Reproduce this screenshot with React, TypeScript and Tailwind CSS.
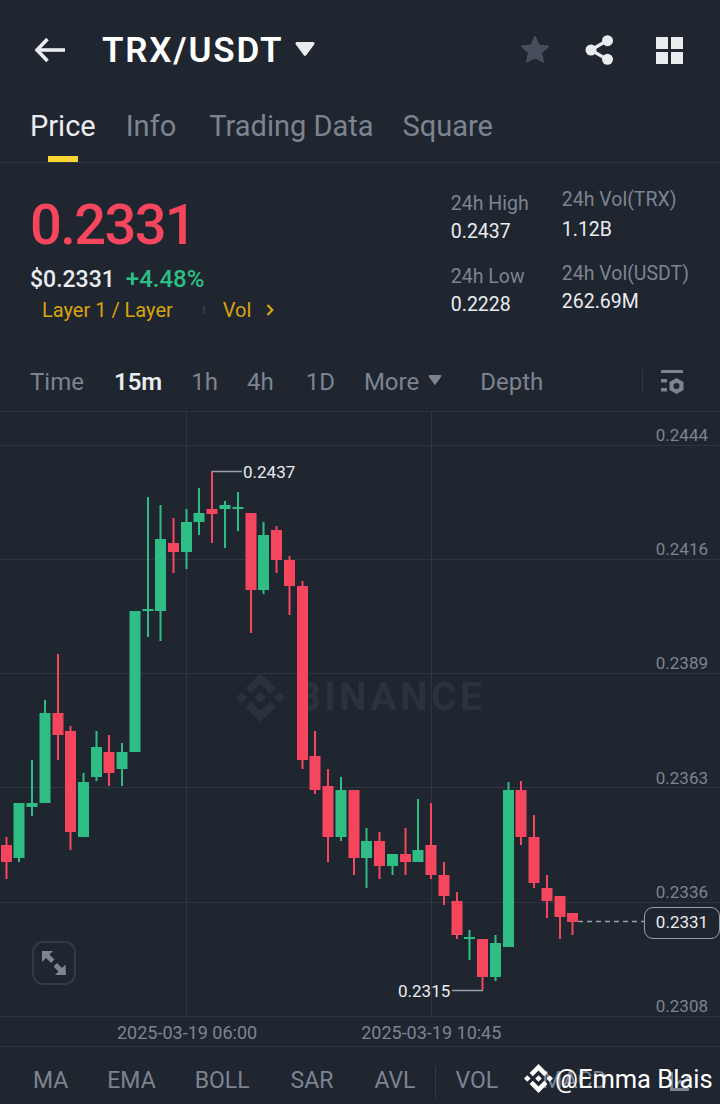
const BINANCE_LOGO =
  'M38.73 53.2l24.59-24.58 24.6 24.6 14.3-14.31L63.32 0 24.43 38.9l14.3 14.3z M0 63.31l14.3-14.31 14.31 14.31-14.31 14.3z M38.73 73.41l24.59 24.59 24.6-24.6 14.31 14.29-38.9 38.91-38.91-38.88-.02-.02z M98 63.31l14.3-14.31 14.31 14.3-14.31 14.32z M77.83 63.3L63.32 48.78 52.59 59.51l-1.24 1.23-2.54 2.54 14.51 14.5 14.51-14.47z';

// x, body top, body bottom, wick top, wick bottom, up?
const candles: [number, number, number, number, number, boolean][] = [
  [6.5, 845, 862, 837, 879, false],
  [19, 803, 858, 803, 862, true],
  [32, 803, 807, 760, 816, true],
  [45, 713, 803, 700, 803, true],
  [58, 713, 735, 654, 760, false],
  [70.5, 731, 832, 726, 850, false],
  [83.5, 782, 837, 773, 837, true],
  [96.5, 747, 777, 731, 781, true],
  [109, 752, 773, 735, 786, false],
  [122, 752, 769, 743, 786, true],
  [135, 611, 752, 611, 752, true],
  [148, 609, 611, 497, 637, true],
  [160.5, 539, 611, 505, 641, true],
  [173.5, 543, 552, 518, 573, false],
  [186.5, 522, 552, 509, 569, true],
  [199, 513, 522, 488, 535, true],
  [212, 509, 514, 471, 543, false],
  [225, 505, 509, 501, 548, true],
  [238, 507, 509, 492, 531, true],
  [251, 513, 590, 513, 633, false],
  [263.5, 535, 590, 522, 594, true],
  [276.5, 530, 560, 526, 573, false],
  [289.5, 560, 586, 556, 615, false],
  [302.5, 586, 760, 581, 769, false],
  [315, 756, 790, 731, 794, false],
  [328, 786, 837, 769, 862, false],
  [341, 790, 837, 777, 841, true],
  [354, 790, 858, 790, 875, false],
  [366.5, 841, 858, 828, 888, true],
  [379.5, 841, 866, 832, 879, false],
  [392.5, 854, 866, 854, 875, true],
  [405.5, 854, 862, 828, 875, false],
  [418, 850, 862, 799, 862, true],
  [431, 845, 875, 803, 879, false],
  [444, 875, 896, 862, 905, false],
  [457, 901, 935, 892, 939, false],
  [469.5, 937, 939, 930, 960, true],
  [482.5, 939, 977, 939, 990, false],
  [495.5, 943, 977, 935, 981, true],
  [508.5, 790, 947, 782, 947, true],
  [521, 790, 837, 781, 845, false],
  [534, 837, 883, 815, 888, false],
  [547, 888, 901, 875, 918, false],
  [560, 896, 917, 896, 939, false],
  [572.5, 913, 922, 913, 935, false],
];

const gridY = [445, 559, 673, 787, 902];
const axis = [
  { label: '0.2444', top: 'top-[13px]' },
  { label: '0.2416', top: 'top-[127px]' },
  { label: '0.2389', top: 'top-[241px]' },
  { label: '0.2363', top: 'top-[356px]' },
  { label: '0.2336', top: 'top-[470px]' },
  { label: '0.2308', top: 'top-[584px]' },
];

const Chart = () => (
  <div className="relative h-[605px] w-full border-t border-[#2c323d]">
    {/* Watermark */}
    <div className="absolute left-[236px] top-[261px] flex items-center gap-[11px] text-[#2c323d]">
      <svg width="49" height="49" viewBox="0 0 126.61 126.61" fill="currentColor">
        <path d={BINANCE_LOGO} />
      </svg>
      <span className="text-[39px] font-bold leading-none tracking-[3.4px]">BINANCE</span>
    </div>

    <svg className="absolute left-0 top-[-1px]" width="720" height="606" viewBox="0 411 720 606">
      {gridY.map((y) => (
        <line key={y} x1="0" x2="720" y1={y + 0.5} y2={y + 0.5} stroke="#2f3540" />
      ))}
      <line x1="0" x2="720" y1="1016.5" y2="1016.5" stroke="#2f3540" />
      <line x1="186.5" x2="186.5" y1="411" y2="1016" stroke="#2f3540" />
      <line x1="431.5" x2="431.5" y1="411" y2="1016" stroke="#2f3540" />

      {candles.map(([x, top, bottom, wickTop, wickBottom, up]) => {
        const color = up ? '#2ebd85' : '#f6465d';
        return (
          <g key={x} fill={color}>
            <rect x={x - 1} y={wickTop} width="2" height={wickBottom - wickTop} />
            <rect x={x - 5.5} y={top} width="11" height={bottom - top} />
          </g>
        );
      })}

      {/* High / low leaders */}
      <path d="M212 471.5H242" stroke="#9aa0aa" strokeWidth="1.5" fill="none" />
      <path d="M452 990.5H483" stroke="#9aa0aa" strokeWidth="1.5" fill="none" />
      <path d="M578 921.5H644" stroke="#9aa0aa" strokeWidth="1.5" strokeDasharray="5 4" fill="none" />
    </svg>

    {axis.map((a) => (
      <span key={a.label} className={`absolute right-[12px] text-[17px] leading-[20px] text-[#7d8490] ${a.top}`}>
        {a.label}
      </span>
    ))}

    <span className="absolute left-[243px] top-[50px] text-[17px] leading-[20px] text-[#eaecef]">0.2437</span>
    <span className="absolute left-[398px] top-[569px] text-[17px] leading-[20px] text-[#eaecef]">0.2315</span>

    {/* Last price tag */}
    <span className="absolute left-[644px] top-[495px] flex h-[32px] w-[76px] items-center justify-center rounded-[9px] border border-[#9aa0aa] bg-[#1f2630] text-[17px] text-[#eaecef]">
      0.2331
    </span>

    {/* Fullscreen button */}
    <button className="absolute left-[32px] top-[529px] flex h-[44px] w-[44px] items-center justify-center rounded-[11px] border-2 border-[#333945]">
      <svg width="26" height="26" viewBox="0 0 26 26" fill="#7d8490">
        <path d="M1 1h11l-3.5 3.5 5 5-3.5 3.5-5-5L1 12z" />
        <path d="M25 25H14l3.5-3.5-5-5 3.5-3.5 5 5 3.500-3.500z" />
      </svg>
    </button>
  </div>
);

export default function App() {
  return (
    <div className="flex h-[1104px] w-[720px] flex-col overflow-hidden bg-[#1f2630] font-[Roboto,sans-serif] text-[#eaecef]">
      {/* Header */}
      <div className="flex h-[100px] items-center pl-[34px] pr-[36px]">
        <svg width="32" height="26" viewBox="0 0 32 26" fill="none" stroke="#eaecef" strokeWidth="3.6">
          <path d="M31 13H4" />
          <path d="M13.500 2 3 13l10.500 11" />
        </svg>
        <h1 className="ml-[36px] text-[35px] font-semibold leading-none tracking-[1.8px] text-white">TRX/USDT</h1>
        <svg className="ml-[12px] mb-[2px]" width="20" height="14" viewBox="0 0 20 14" fill="#eaecef">
          <path d="M2 0h16a1.500 1.500 0 0 1 1.200 2.400l-8 10.800a1.500 1.500 0 0 1-2.400 0l-8-10.800A1.500 1.500 0 0 1 2 0z" />
        </svg>
        <div className="ml-auto flex items-center">
          <svg width="30" height="30" viewBox="0 0 30 30" fill="#474d5a" stroke="#474d5a" strokeWidth="2" strokeLinejoin="round">
            <path d="M15 2l3.700 8.600 9.300.9-7 6.100 2.100 9.100L15 22l-8.100 4.700L9 17.600l-7-6.100 9.300-.9z" />
          </svg>
          <svg className="ml-[35px]" width="30" height="30" viewBox="0 0 30 30" fill="#eaecef">
            <path d="M6 15L22 5.700M6 15l16 9.300" stroke="#eaecef" strokeWidth="3.200" fill="none" />
            <circle cx="6" cy="15" r="5.500" />
            <circle cx="22.500" cy="5.700" r="5.500" />
            <circle cx="22.500" cy="24.300" r="5.500" />
          </svg>
          <svg className="ml-[41px]" width="28" height="27" viewBox="0 0 28 27" fill="#eaecef">
            <rect x="0" y="0" width="12" height="12" />
            <rect x="15" y="0" width="12" height="12" />
            <rect x="0" y="15" width="12" height="12" />
            <rect x="15" y="15" width="12" height="12" />
          </svg>
        </div>
      </div>

      {/* Tabs */}
      <div className="flex h-[63px] border-b border-[#2f3540] pl-[30px] text-[29px] leading-[52px] text-[#7d8490]">
        <div className="relative h-[62px] text-[#eaecef]">
          Price
          <div className="absolute bottom-0 left-[18px] h-[6px] w-[30px] bg-[#fcd535]" />
        </div>
        <div className="ml-[30px]">Info</div>
        <div className="ml-[33px]">Trading Data</div>
        <div className="ml-[29px]">Square</div>
      </div>

      {/* Stats */}
      <div className="flex h-[197px] pl-[30px]">
        <div className="flex flex-col">
          <div className="mt-[32px] text-[56px] font-medium leading-[60px] tracking-[-1.600px] text-[#f6465d]">0.2331</div>
          <div className="mt-[10px] flex items-baseline gap-[11px] text-[23px] font-medium leading-[28px]">
            <span>$0.2331</span>
            <span className="text-[24px] text-[#2ebd85]">+4.48%</span>
          </div>
          <div className="ml-[12px] mt-[3px] flex items-center text-[20px] leading-[26px] text-[#d9a40e]">
            <span>Layer 1 / Layer</span>
            <span className="ml-[30px] h-[8px] w-[2px] bg-[#333945]" />
            <span className="ml-[18px]">Vol</span>
            <svg className="ml-[15px]" width="8" height="12" viewBox="0 0 8 12" fill="none" stroke="#d9a40e" strokeWidth="2.200">
              <path d="M1.500 1l4.800 5-4.800 5" />
            </svg>
          </div>
        </div>
        <div className="ml-auto flex gap-[32px] pr-[31px] text-[19.500px] leading-[26px]">
          <div className="flex w-[79px] flex-col pt-[28px]">
            <span className="text-[#7d8490]">24h High</span>
            <span className="mt-[2px] text-[#eaecef]">0.2437</span>
            <span className="mt-[19px] text-[#7d8490]">24h Low</span>
            <span className="mt-[2px] text-[#eaecef]">0.2228</span>
          </div>
          <div className="flex flex-col pt-[24px]">
            <span className="text-[#7d8490]">24h Vol(TRX)</span>
            <span className="mt-[4px] text-[#eaecef]">1.12B</span>
            <span className="mt-[18px] text-[#7d8490]">24h Vol(USDT)</span>
            <span className="mt-[2px] text-[#eaecef]">262.69M</span>
          </div>
        </div>
      </div>

      {/* Intervals */}
      <div className="flex h-[51px] items-center pb-[8px] pl-[30px] pr-[36px] text-[24px] text-[#7d8490]">
        <span>Time</span>
        <span className="ml-[30px] font-semibold text-[#eaecef]">15m</span>
        <span className="ml-[29px]">1h</span>
        <span className="ml-[29px]">4h</span>
        <span className="ml-[32px]">1D</span>
        <span className="ml-[29px]">More</span>
        <svg className="ml-[9px] mb-[4px]" width="14" height="10" viewBox="0 0 14 10" fill="#7d8490">
          <path d="M1.500 0h11a1 1 0 0 1 .8 1.600l-5.500 7.600a1 1 0 0 1-1.600 0L.7 1.600A1 1 0 0 1 1.500 0z" />
        </svg>
        <span className="ml-[38px]">Depth</span>
        <span className="ml-auto h-[24px] w-px bg-[#333945]" />
        <svg className="ml-[17px]" width="24" height="24" viewBox="0 0 24 24" fill="#7d8490">
          <rect x="1" y="0" width="22" height="3" />
          <rect x="1" y="9" width="6" height="3.500" />
          <rect x="1" y="18" width="6" height="3.500" />
          <path fillRule="evenodd" d="M16.500 8l7 4v8l-7 4-7-4v-8zM16.500 13a3 3 0 1 0 0 6 3 3 0 0 0 0-6z" />
        </svg>
      </div>

      <Chart />

      {/* Time axis */}
      <div className="flex h-[31px] items-center border-b border-[#2f3540] pl-[117px] pt-[3px] text-[18px] text-[#7d8490]">
        <span>2025-03-19 06:00</span>
        <span className="ml-[104px]">2025-03-19 10:45</span>
      </div>

      {/* Indicators */}
      <div className="relative flex flex-1 items-center pl-[33px] pt-[12px] text-[23px] text-[#7d8490]">
        <span>MA</span>
        <span className="ml-[39px]">EMA</span>
        <span className="ml-[39px]">BOLL</span>
        <span className="ml-[41px]">SAR</span>
        <span className="ml-[41px]">AVL</span>
        <span className="ml-[19px] h-[32px] w-px bg-[#333945]" />
        <span className="ml-[20px]">VOL</span>
        <span className="ml-[44px]">MACD</span>
        <svg className="ml-[60px]" width="24" height="24" viewBox="0 0 24 24" fill="#7d8490">
          <path d="M3 2h3v16h16v3H3z" />
          <path d="M8 15l5-6 3 3 5-7 2 1.500-7 9-3-3-3 4z" />
        </svg>

        {/* Author watermark */}
        <div className="absolute left-[524px] top-[19px] flex items-center gap-[2px] text-[25.500px] leading-none text-white">
          <svg className="-mt-[2px]" width="29" height="29" viewBox="0 0 126.61 126.61" fill="currentColor">
            <path d={BINANCE_LOGO} />
          </svg>
          <span>@Emma Blais</span>
        </div>
      </div>
    </div>
  );
}
